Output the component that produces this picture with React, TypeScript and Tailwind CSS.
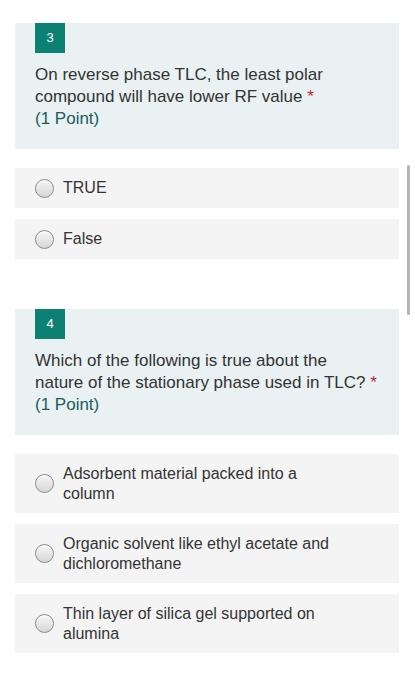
import React from "react";

type Question = {
  num: number;
  title: string;
  options: string[];
};

const QUESTIONS: Question[] = [
  {
    num: 3,
    title: "On reverse phase TLC, the least polar compound will have lower RF value",
    options: ["TRUE", "False"],
  },
  {
    num: 4,
    title: "Which of the following is true about the nature of the stationary phase used in TLC?",
    options: [
      "Adsorbent material packed into a column",
      "Organic solvent like ethyl acetate and dichloromethane",
      "Thin layer of silica gel supported on alumina",
    ],
  },
];

export default function App() {
  return (
    <div
      className="relative min-h-[700px] bg-white px-[15px] pt-[23px] text-[#333333]"
      style={{ fontFamily: '"Liberation Sans", Arial, sans-serif' }}
    >
      <div className="flex flex-col gap-[50px]">
        {QUESTIONS.map((q) => (
          <QuestionBlock key={q.num} q={q} />
        ))}
      </div>
      {/* scrollbar thumb */}
      <div className="absolute left-[407px] top-[165px] h-[150px] w-[3px] rounded-full bg-[#b5b5b5]" />
    </div>
  );
}

function QuestionBlock({ q }: { q: Question }) {
  return (
    <div>
      <div className="w-[384px] bg-[#e9f1f3] px-[20px] pb-[19px]">
        <div className="flex h-[30px] w-[30px] items-center justify-center bg-[#0b8073] text-[13px] text-white">
          {q.num}
        </div>
        <div className="mt-[11px] w-[344px] text-[17px] leading-[22px] text-[#333333]">
          {q.title} <span className="text-[#c4262c]">*</span>
        </div>
        <div className="text-[17px] leading-[22px] text-[#1d5c5c]">(1 Point)</div>
      </div>
      <div className="mt-[19px] flex flex-col gap-[11px]">
        {q.options.map((o) => (
          <Option key={o} label={o} tall={q.options.length > 2} />
        ))}
      </div>
    </div>
  );
}

function Option({ label, tall }: { label: string; tall: boolean }) {
  return (
    <div
      className={
        tall
          ? "flex h-[59px] w-[384px] items-center bg-[#f4f4f4] pl-[20px]"
          : "flex h-[40px] w-[384px] items-center bg-[#f4f4f4] pl-[20px]"
      }
    >
      <span className="h-[19px] w-[19px] shrink-0 rounded-full border border-[#8a8a8a] bg-gradient-to-b from-[#f7f7f7] to-[#d6d6d6] shadow-[inset_0_1px_1px_rgba(255,255,255,0.8)]" />
      <span className="ml-[9px] w-[280px] text-[16px] leading-[20px] text-[#333333]">{label}</span>
    </div>
  );
}
